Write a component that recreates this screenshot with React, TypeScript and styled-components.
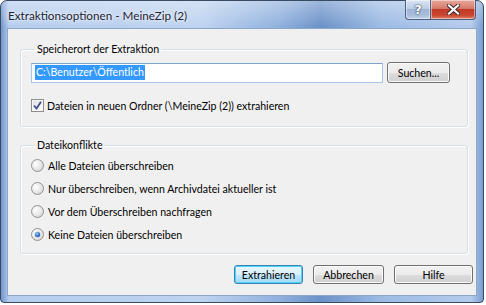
import React from "react";
import styled, { createGlobalStyle } from "styled-components";

const GlobalStyle = createGlobalStyle`
  html, body {
    margin: 0;
    padding: 0;
    background: #ffffff;
  }
  * {
    box-sizing: border-box;
  }
`;

const uiFont = `"Segoe UI", Lato, "Noto Sans", sans-serif`;

const Window = styled.div`
  width: 484px;
  height: 303px;
  display: flex;
  flex-direction: column;
  padding: 0 6px 6px 6px;
  border: 1px solid #3a4a63;
  border-radius: 7px 7px 4px 4px;
  background:
    linear-gradient(180deg, rgba(255, 255, 255, 0.35) 0px, rgba(255, 255, 255, 0) 26px),
    linear-gradient(
      90deg,
      #6f95cb 0px,
      #b5cdee 8px,
      #bed3f0 200px,
      #8fb0dd 280px,
      #6b91c8 320px,
      #9cbbe4 380px,
      #b4cbec 470px,
      #6f95cb 484px
    );
  font-family: ${uiFont};
  font-size: 10.6px;
  color: #000;
`;

const TitleBar = styled.div`
  height: 27px;
  display: flex;
  align-items: flex-start;
  justify-content: space-between;
`;

const Title = styled.div`
  padding: 7px 0 0 1px;
  font-size: 11.7px;
  color: #1a2233;
  text-shadow: 0 0 6px rgba(255, 255, 255, 0.9), 0 0 2px rgba(255, 255, 255, 0.9);
`;

const CaptionButtons = styled.div`
  display: flex;
  margin-top: -1px;
  margin-right: 1px;
`;

const CaptionButton = styled.div<{ $kind: "help" | "close" }>`
  height: 20px;
  width: ${(p) => (p.$kind === "close" ? "45px" : "26px")};
  display: flex;
  align-items: center;
  justify-content: center;
  border: 1px solid #4a5f80;
  border-top: none;
  border-left: ${(p) => (p.$kind === "close" ? "none" : "1px solid #4a5f80")};
  border-radius: ${(p) => (p.$kind === "close" ? "0 0 4px 0" : "0 0 0 4px")};
  box-shadow: inset 0 0 0 1px rgba(255, 255, 255, 0.45);
  background: ${(p) =>
    p.$kind === "close"
      ? "linear-gradient(180deg, #e8a89c 0%, #d5796a 45%, #c23a26 50%, #c9452f 80%, #e0826a 100%)"
      : "linear-gradient(180deg, #dbe5f3 0%, #bccde6 45%, #9fb5d6 50%, #a8bedc 80%, #c2d4ec 100%)"};
  color: #fff;
  font-weight: bold;
  font-size: 13px;
  font-family: "DejaVu Sans", sans-serif;
  text-shadow: 0 0 2px #2a3446, 0 0 1px #2a3446;
`;

const Client = styled.div`
  flex: 1;
  display: flex;
  flex-direction: column;
  background: #f0f0f0;
  border: 1px solid #8ea7c8;
  padding: 13px 9px 11px 12px;
`;

const Group = styled.fieldset`
  margin: 0;
  min-width: 0;
  width: 448px;
  border: 1px solid #d5dfe5;
  border-radius: 3px;
  box-shadow: inset 1px 1px 0 #ffffff, 1px 1px 0 #ffffff;
`;

const GroupOne = styled(Group)`
  padding: 5px 15px 13px 10px;
`;

const GroupTwo = styled(Group)`
  margin-top: 11px;
  padding: 1px 15px 7px 10px;
`;

const Legend = styled.legend`
  padding: 0 2px;
  margin-left: 4px;
  line-height: 15px;
  color: #000;
`;

const PathRow = styled.div`
  display: flex;
  align-items: center;
  gap: 4px;
`;

const PathField = styled.div`
  width: 352px;
  height: 20px;
  display: flex;
  align-items: center;
  padding: 0 3px;
  background: #fff;
  border: 1px solid #a7c6e6;
  border-top-color: #7fa6cf;
`;

const Selected = styled.span`
  background: #3399ff;
  color: #fff;
  line-height: 15px;
  padding: 0 1px;
`;

const Button = styled.div<{ $width: number; $default?: boolean }>`
  width: ${(p) => p.$width}px;
  height: ${(p) => (p.$default !== undefined ? 19 : 21)}px;
  display: flex;
  align-items: center;
  justify-content: center;
  border: 1px solid ${(p) => (p.$default ? "#3c7fb1" : "#707070")};
  border-radius: 3px;
  box-shadow: inset 0 0 0 1px ${(p) => (p.$default ? "#48d7fb" : "#fbfbfb")};
  background: ${(p) =>
    p.$default
      ? "linear-gradient(180deg, #eaf6fd 0%, #d9f0fc 50%, #bee6fd 51%, #a7d9f5 100%)"
      : "linear-gradient(180deg, #f2f2f2 0%, #ebebeb 50%, #dddddd 51%, #cfcfcf 100%)"};
  color: #000;
`;

const CheckRow = styled.label`
  display: flex;
  align-items: center;
  gap: 3px;
  margin-top: 15px;
  height: 15px;
`;

const CheckBox = styled.span`
  width: 13px;
  height: 13px;
  display: flex;
  align-items: center;
  justify-content: center;
  border: 1px solid #8e8f8f;
  background: linear-gradient(135deg, #dcdcdc 0%, #f4f4f4 60%, #ffffff 100%);
  box-shadow: inset 0 0 0 1px #f6f6f6;
`;

const RadioRow = styled.label`
  display: flex;
  align-items: center;
  gap: 4px;
  height: 23px;
`;

const Radio = styled.span<{ $checked?: boolean }>`
  width: 13px;
  height: 13px;
  border-radius: 50%;
  display: flex;
  align-items: center;
  justify-content: center;
  border: 1px solid #939393;
  background: radial-gradient(circle at 35% 35%, #ffffff 0%, #e6e6e6 55%, #c9c9c9 100%);

  &::after {
    content: "";
    display: ${(p) => (p.$checked ? "block" : "none")};
    width: 5px;
    height: 5px;
    border-radius: 50%;
    background: radial-gradient(circle at 40% 35%, #9fd0ff 0%, #2b6dc4 55%, #123f82 100%);
    box-shadow: 0 0 1px #0d3c80;
  }
`;

const ButtonRow = styled.div`
  display: flex;
  justify-content: flex-end;
  align-items: center;
  gap: 10px;
  margin-top: auto;
  margin-right: -6px;
`;

function CheckMark() {
  return (
    <svg width="9" height="9" viewBox="0 0 9 9">
      <path d="M1 4.5 L3.5 7.5 L8 0.8" fill="none" stroke="#3c4f8f" strokeWidth="1.8" />
    </svg>
  );
}

function CloseGlyph() {
  return (
    <svg width="13" height="11" viewBox="0 0 13 11">
      <path d="M2 1.5 L11 9.5 M11 1.5 L2 9.5" stroke="#3a2a2a" strokeWidth="4" strokeLinecap="square" />
      <path d="M2 1.5 L11 9.5 M11 1.5 L2 9.5" stroke="#ffffff" strokeWidth="2.2" strokeLinecap="square" />
    </svg>
  );
}

const options = [
  "Alle Dateien überschreiben",
  "Nur überschreiben, wenn Archivdatei aktueller ist",
  "Vor dem Überschreiben nachfragen",
  "Keine Dateien überschreiben"
];

export default function App() {
  return (
    <>
      <GlobalStyle />
      <Window>
        <TitleBar>
          <Title>Extraktionsoptionen - MeineZip (2)</Title>
          <CaptionButtons>
            <CaptionButton $kind="help">?</CaptionButton>
            <CaptionButton $kind="close">
              <CloseGlyph />
            </CaptionButton>
          </CaptionButtons>
        </TitleBar>
        <Client>
          <GroupOne>
            <Legend>Speicherort der Extraktion</Legend>
            <PathRow>
              <PathField>
                <Selected>C:\Benutzer\Öffentlich</Selected>
              </PathField>
              <Button $width={63}>Suchen...</Button>
            </PathRow>
            <CheckRow>
              <CheckBox>
                <CheckMark />
              </CheckBox>
              Dateien in neuen Ordner (\MeineZip (2)) extrahieren
            </CheckRow>
          </GroupOne>
          <GroupTwo>
            <Legend>Dateikonflikte</Legend>
            {options.map((label, i) => (
              <RadioRow key={label}>
                <Radio $checked={i === 3} />
                {label}
              </RadioRow>
            ))}
          </GroupTwo>
          <ButtonRow>
            <Button $width={69} $default>
              Extrahieren
            </Button>
            <Button $width={71} $default={false}>
              Abbrechen
            </Button>
            <Button $width={79} $default={false}>
              Hilfe
            </Button>
          </ButtonRow>
        </Client>
      </Window>
    </>
  );
}
